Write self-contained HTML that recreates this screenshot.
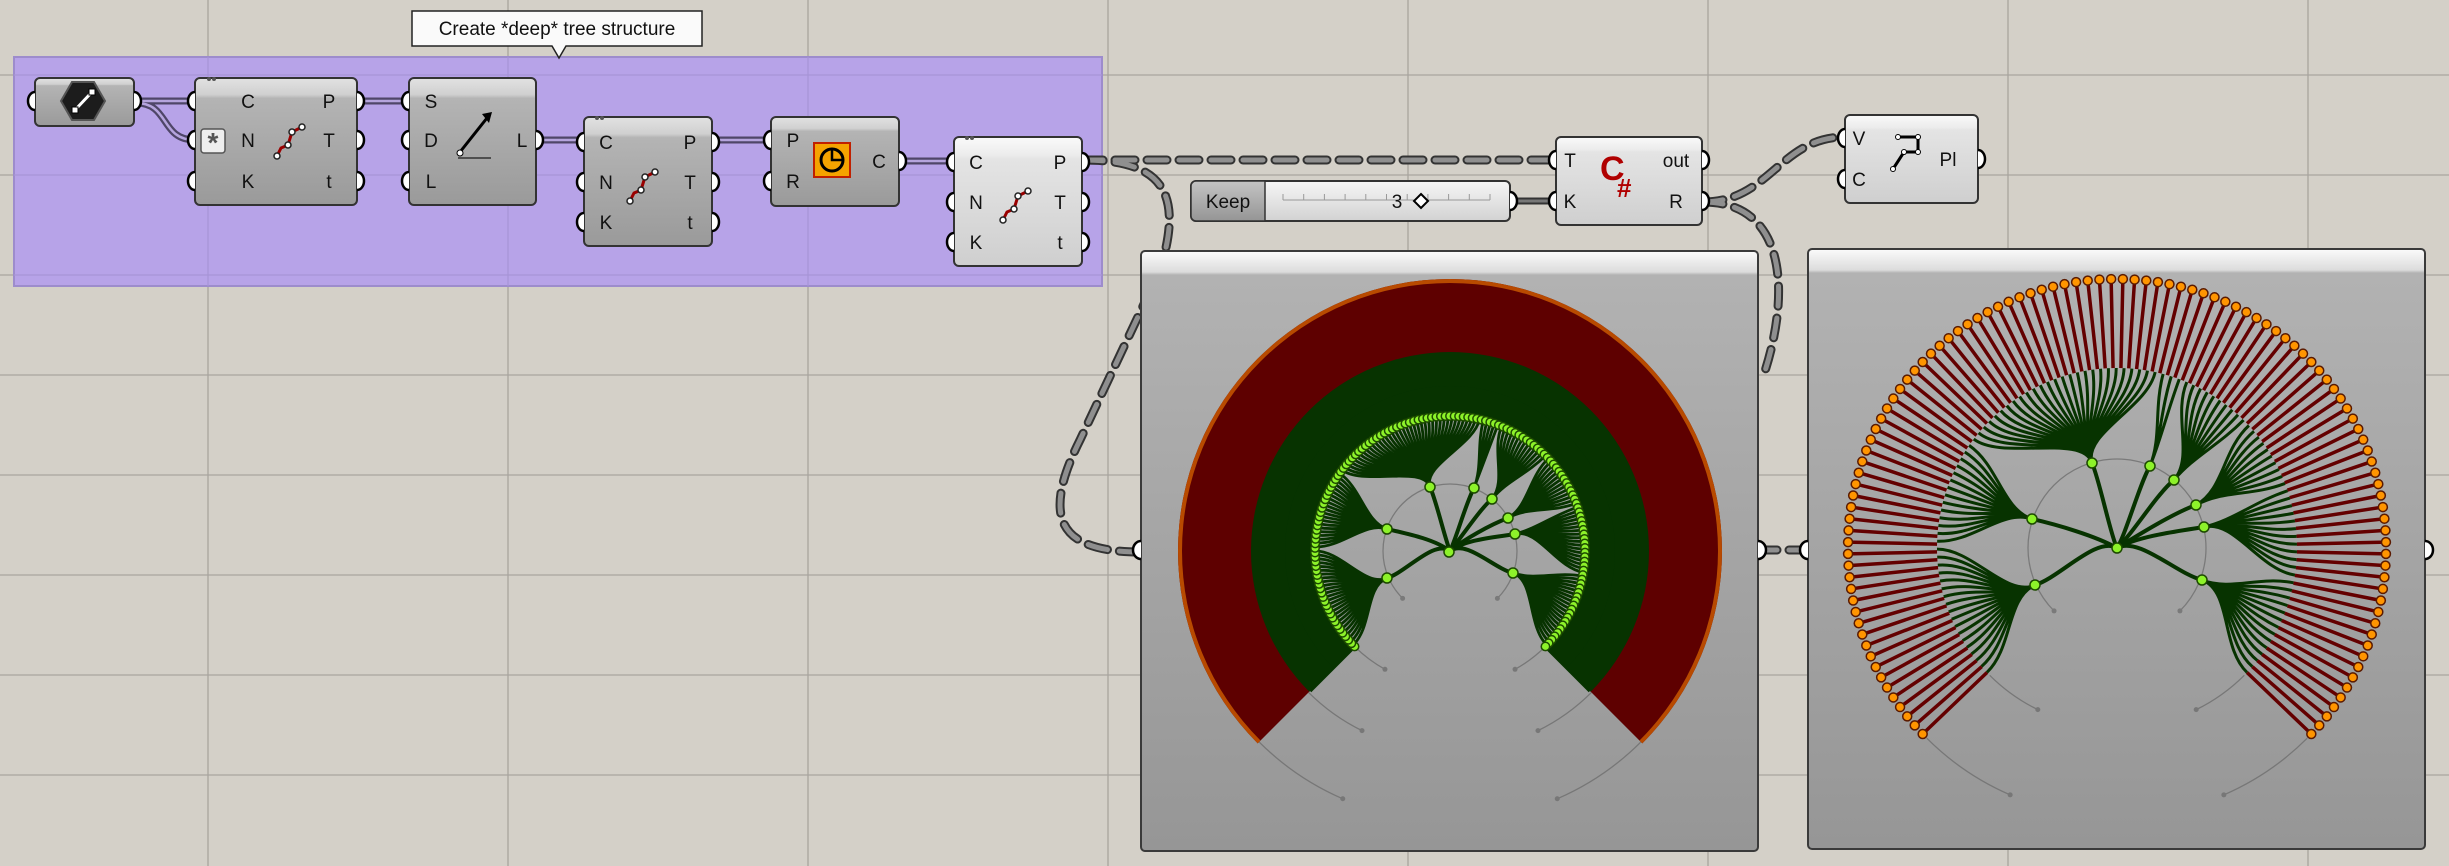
<!DOCTYPE html>
<html><head><meta charset="utf-8">
<style>
html,body{margin:0;padding:0;background:#d4d0c8;}
svg{display:block;}
text{font-family:"Liberation Sans",sans-serif;font-size:19px;fill:#111;}
</style></head>
<body>
<svg id="s" width="2449" height="866" viewBox="0 0 2449 866" xmlns="http://www.w3.org/2000/svg">
<defs>
<linearGradient id="gDark" x1="0" y1="0" x2="0" y2="1">
<stop offset="0" stop-color="#e2e2e2"/><stop offset="0.13" stop-color="#d0d0d0"/><stop offset="0.16" stop-color="#b4b4b4"/><stop offset="1" stop-color="#9a9a9a"/></linearGradient>
<linearGradient id="gLight" x1="0" y1="0" x2="0" y2="1">
<stop offset="0" stop-color="#fafafa"/><stop offset="0.14" stop-color="#ececec"/><stop offset="0.17" stop-color="#e4e4e4"/><stop offset="1" stop-color="#cfcfcf"/></linearGradient>
<linearGradient id="gPanel" x1="0" y1="0" x2="0" y2="1">
<stop offset="0" stop-color="#fbfbfb"/><stop offset="0.035" stop-color="#dcdcdc"/><stop offset="0.04" stop-color="#b2b2b2"/><stop offset="1" stop-color="#969696"/></linearGradient>
<linearGradient id="gSlider" x1="0" y1="0" x2="0" y2="1">
<stop offset="0" stop-color="#f6f6f6"/><stop offset="1" stop-color="#d2d2d2"/></linearGradient>
<linearGradient id="gKeep" x1="0" y1="0" x2="0" y2="1">
<stop offset="0" stop-color="#c4c4c4"/><stop offset="1" stop-color="#959595"/></linearGradient>
<clipPath id="cpL"><rect x="1142" y="252" width="615" height="598"/></clipPath>
<clipPath id="cpR"><rect x="1809" y="250" width="615" height="598"/></clipPath>
</defs>
<g id="grid" stroke="#a9a59e" stroke-width="1.3"></g>

<rect x="14" y="57" width="1088" height="229" fill="#b7a3e8" stroke="#9d8ccc" stroke-width="2"/>
<g stroke="#a794d6" stroke-width="1.2"><line x1="14" y1="75" x2="1102" y2="75"/><line x1="14" y1="175" x2="1102" y2="175"/><line x1="14" y1="275" x2="1102" y2="275"/><line x1="208" y1="57" x2="208" y2="286"/><line x1="508" y1="57" x2="508" y2="286"/><line x1="808" y1="57" x2="808" y2="286"/></g>

<path d="M412,11 H702 V46 H566 L559,58 L552,46 H412 Z" fill="#fafafa" stroke="#222" stroke-width="1.5"/>
<text x="557" y="35" text-anchor="middle" style="font-size:19px">Create *deep* tree structure</text>

<g fill="none" stroke="#4f4668" stroke-width="7" stroke-linecap="round">
<path d="M136,101 H195"/><path d="M136,103 C170,103 160,140 195,140"/>
<path d="M357,101 H409"/><path d="M537,140 H584"/><path d="M713,140 H771"/><path d="M900,161 H954"/>
</g>
<g fill="none" stroke="#b5a4dd" stroke-width="2.5">
<path d="M136,101 H195"/><path d="M136,103 C170,103 160,140 195,140"/>
<path d="M357,101 H409"/><path d="M537,140 H584"/><path d="M713,140 H771"/><path d="M900,161 H954"/>
</g>
<path d="M1510,201 H1556" stroke="#333" stroke-width="7" fill="none"/>
<path d="M1510,201 H1556" stroke="#777" stroke-width="3" fill="none"/>

<g fill="none" stroke-linecap="round">
<g stroke="#333" stroke-width="9" stroke-dasharray="20 12">
<path id="w1" d="M1083,160 H1556"/>
<path id="w2" d="M1083,160 C1160,160 1185,190 1160,270 L1080,440 C1040,520 1060,552 1141,552"/>
<path id="w3" d="M1703,202 C1770,202 1780,137 1845,137"/>
<path id="w4" d="M1703,202 C1790,202 1790,300 1762,380"/>
<path id="w5" d="M1757,550 H1808"/>
</g>
<g stroke="#8f8f8f" stroke-width="5" stroke-dasharray="20 12">
<use href="#w1"/><use href="#w2"/><use href="#w3"/><use href="#w4"/><use href="#w5"/>
</g>
</g>

<g id="comps"></g>

<rect x="1141" y="251" width="617" height="600" rx="4" fill="url(#gPanel)" stroke="#3a3a3a" stroke-width="2"/>
<rect x="1808" y="249" width="617" height="600" rx="4" fill="url(#gPanel)" stroke="#3a3a3a" stroke-width="2"/>
<g id="pl" clip-path="url(#cpL)"></g>
<g id="pr" clip-path="url(#cpR)"></g>
<g fill="#fff" stroke="#000" stroke-width="2.5">
<path d="M1141,541 a8,9 0 0 0 0,18"/><path d="M1758,541 a8,9 0 0 1 0,18"/>
<path d="M1808,541 a8,9 0 0 0 0,18"/><path d="M2425,541 a8,9 0 0 1 0,18"/>
</g>
</svg>
<script>
var NS="http://www.w3.org/2000/svg";
function el(p,t,a,txt){var e=document.createElementNS(NS,t);for(var k in a)e.setAttribute(k,a[k]);if(txt!==undefined)e.textContent=txt;p.appendChild(e);return e;}
var grid=document.getElementById('grid');
for(var x=208;x<2449;x+=300)el(grid,'line',{x1:x,y1:0,x2:x,y2:866});
for(var y=75;y<866;y+=100)el(grid,'line',{x1:0,y1:y,x2:2449,y2:y});
var C=document.getElementById('comps');
function port(x,y,side){
  var d= side<0 ? "M"+x+","+(y-9)+" a7,9 0 0 0 0,18" : "M"+x+","+(y-9)+" a7,9 0 0 1 0,18";
  el(C,'path',{d:d,fill:'#fff',stroke:'#000','stroke-width':2.5});
}
function comp(x,y,w,h,fill,ins,outs){
  el(C,'rect',{x:x,y:y,width:w,height:h,rx:5,fill:fill,stroke:'#333','stroke-width':2});
  ins.forEach(function(p){port(x,p[1],-1);if(p[0])el(C,'text',{x:x+p[2],y:p[1]+7,'text-anchor':'middle'},p[0]);});
  outs.forEach(function(p){port(x+w,p[1],1);if(p[0])el(C,'text',{x:x+w-p[2],y:p[1]+7,'text-anchor':'middle'},p[0]);});
}
function divIcon(cx,cy){
  el(C,'path',{d:"M"+(cx-13)+","+(cy+14)+" L"+(cx-9)+","+(cy+6)+" L"+(cx-2)+","+(cy+3)+" L"+(cx+2)+","+(cy-10)+" L"+(cx+12)+","+(cy-15),fill:'none',stroke:'#9a0000','stroke-width':3});
  [[cx-13,cy+14],[cx-2,cy+3],[cx+2,cy-10],[cx+12,cy-15]].forEach(function(p){el(C,'circle',{cx:p[0],cy:p[1],r:3,fill:'#fff',stroke:'#222','stroke-width':1.5});});
}
el(C,'rect',{x:35,y:78,width:99,height:48,rx:5,fill:'url(#gDark)',stroke:'#333','stroke-width':2});
port(35,101,-1);port(134,101,1);
el(C,'path',{d:"M61,101 L72,82 L94,82 L105,101 L94,120 L72,120 Z",fill:'#1c1c1c',stroke:'#555','stroke-width':2});
el(C,'path',{d:"M75,110 L92,92",stroke:'#fff','stroke-width':3});
el(C,'rect',{x:72,y:107,width:6,height:6,fill:'#fff',stroke:'#000'});el(C,'rect',{x:89,y:89,width:6,height:6,fill:'#fff',stroke:'#000'});
comp(195,78,162,127,'url(#gDark)',[['C',101,53],['N',140,53],['K',181,53]],[['P',101,28],['T',140,28],['t',181,28]]);
el(C,'rect',{x:201,y:129,width:24,height:24,rx:3,fill:'#eee',stroke:'#555','stroke-width':1.5});
el(C,'text',{x:213,y:152,'text-anchor':'middle',style:'font-size:28px;font-weight:bold;fill:#555'},'*');
divIcon(290,142);
el(C,'circle',{cx:209,cy:79,r:2,fill:'#555'});el(C,'circle',{cx:214,cy:79,r:2,fill:'#555'});
comp(409,78,127,127,'url(#gDark)',[['S',101,22],['D',140,22],['L',181,22]],[['L',140,14]]);
el(C,'path',{d:"M460,152 L487,118",stroke:'#000','stroke-width':3});
el(C,'path',{d:"M482,114 L492,112 L489,123 Z",fill:'#000'});
el(C,'path',{d:"M458,158 H491",stroke:'#333','stroke-width':1.5});
el(C,'circle',{cx:460,cy:153,r:3,fill:'#fff',stroke:'#000'});
comp(584,117,128,129,'url(#gDark)',[['C',142,22],['N',182,22],['K',222,22]],[['P',142,22],['T',182,22],['t',222,22]]);
divIcon(643,187);
el(C,'circle',{cx:597,cy:118,r:2,fill:'#555'});el(C,'circle',{cx:602,cy:118,r:2,fill:'#555'});
comp(771,117,128,89,'url(#gDark)',[['P',140,22],['R',181,22]],[['C',161,20]]);
el(C,'rect',{x:814,y:143,width:36,height:34,fill:'#f5a300',stroke:'#c02000','stroke-width':2});
el(C,'circle',{cx:832,cy:160,r:11,fill:'none',stroke:'#000','stroke-width':3});
el(C,'path',{d:"M832,149 V160 H843",fill:'none',stroke:'#000','stroke-width':2.5});
comp(954,137,128,129,'url(#gLight)',[['C',162,22],['N',202,22],['K',242,22]],[['P',162,22],['T',202,22],['t',242,22]]);
divIcon(1016,206);
el(C,'circle',{cx:967,cy:138,r:2,fill:'#555'});el(C,'circle',{cx:972,cy:138,r:2,fill:'#555'});
el(C,'rect',{x:1191,y:181,width:319,height:40,rx:5,fill:'url(#gSlider)',stroke:'#333','stroke-width':2});
el(C,'path',{d:"M1196,181 H1265 V221 H1196 a5,5 0 0 1 -5,-5 V186 a5,5 0 0 1 5,-5Z",fill:'url(#gKeep)',stroke:'#333','stroke-width':1.5});
el(C,'text',{x:1228,y:208,'text-anchor':'middle'},'Keep');
el(C,'path',{d:"M1283,200 H1490",stroke:'#999','stroke-width':1});
for(var i=0;i<11;i++){var xx=1283+i*20.7;el(C,'line',{x1:xx,y1:194,x2:xx,y2:200,stroke:'#999'});}
el(C,'text',{x:1397,y:208,'text-anchor':'middle'},'3');
el(C,'path',{d:"M1421,194 L1428,201 L1421,208 L1414,201 Z",fill:'#fff',stroke:'#000','stroke-width':2});
port(1510,201,1);
comp(1556,137,146,88,'url(#gLight)',[['T',160,14],['K',201,14]],[['out',160,26],['R',201,26]]);
el(C,'text',{x:1600,y:180,style:'font-size:34px;font-weight:bold;fill:#b00000'},'C');
el(C,'text',{x:1617,y:197,style:'font-size:26px;font-weight:bold;fill:#b00000'},'#');
comp(1845,115,133,88,'url(#gLight)',[['V',138,14],['C',179,14]],[['Pl',159,30]]);
el(C,'path',{d:"M1893,169 L1904,152 L1918,152 L1918,137 L1898,137",fill:'none',stroke:'#000','stroke-width':3});
[[1893,169],[1904,152],[1918,152],[1918,137],[1898,137]].forEach(function(p){el(C,'circle',{cx:p[0],cy:p[1],r:2.5,fill:'#fff',stroke:'#000'});});

function P(cx,cy,R,t){var a=(225-270*t)*Math.PI/180;return [cx+R*Math.cos(a),cy-R*Math.sin(a)];}
function annulus(g,cx,cy,r1,r2,fill){
  var a=P(cx,cy,r2,0),b=P(cx,cy,r2,1),c=P(cx,cy,r1,1),d=P(cx,cy,r1,0);
  el(g,'path',{d:"M"+a+" A"+r2+","+r2+" 0 1 1 "+b+" L"+c+" A"+r1+","+r1+" 0 1 0 "+d+" Z",fill:fill});
}
function ext(g,cx,cy,r,te){ // gray extensions beyond arc ends
  var a=P(cx,cy,r,-te),b=P(cx,cy,r,0),c=P(cx,cy,r,1),d=P(cx,cy,r,1+te);
  el(g,'path',{d:"M"+b+" A"+r+","+r+" 0 0 0 "+a+" M"+c+" A"+r+","+r+" 0 0 1 "+d,fill:'none',stroke:'#777','stroke-width':1.3});
  [a,d].forEach(function(p){el(g,'circle',{cx:p[0],cy:p[1],r:2.5,fill:'#777'});});
}
function arc(g,cx,cy,r){var a=P(cx,cy,r,0),b=P(cx,cy,r,1);
  el(g,'path',{d:"M"+a+" A"+r+","+r+" 0 1 1 "+b,fill:'none',stroke:'#7a7a7a','stroke-width':1.3});
  el(g,'circle',{cx:a[0],cy:a[1],r:2.5,fill:'#7a7a7a'});el(g,'circle',{cx:b[0],cy:b[1],r:2.5,fill:'#7a7a7a'});}
function tree(g,cx,cy,nodes,br,Rf,nLines,lw){
  nodes.forEach(function(n){
    el(g,'path',{d:"M"+cx+","+cy+" C"+(cx+(n[0]-cx)*0.25)+","+(cy-12)+" "+(n[0]-(n[0]-cx)*0.3)+","+(n[1]+(cy-n[1])*0.2)+" "+n[0]+","+n[1],fill:'none',stroke:'#073300','stroke-width':4});
  });
  nodes.forEach(function(n,k){
    var t0=br[k],t1=br[k+1],cnt=Math.max(2,Math.round((t1-t0)*nLines));
    var d="";
    for(var i=0;i<cnt;i++){var t=t0+(t1-t0)*(i+0.5)/cnt;var e=P(cx,cy,Rf,t),m=P(cx,cy,Rf*0.8,t);
      var ox=n[0]+(n[0]-cx)*0.35,oy=n[1]+(n[1]-cy)*0.35;
      d+="M"+n[0]+","+n[1]+" C"+ox+","+oy+" "+m[0]+","+m[1]+" "+e[0]+","+e[1];}
    el(g,'path',{d:d,fill:'none',stroke:'#073300','stroke-width':lw});
  });
}
function dot(g,x,y,r,f,s){el(g,'circle',{cx:x,cy:y,r:r,fill:f,stroke:s,'stroke-width':1.5});}
var br=[0,.17,.3,.55,.58,.67,.76,.87,1];
var L=document.getElementById('pl'),cx=1450,cy=551;
arc(L,cx,cy,67);ext(L,cx,cy,135,0.06);ext(L,cx,cy,200,0.07);ext(L,cx,cy,270,0.08);
annulus(L,cx,cy,198,272,'#5e0000');
(function(){var d="";for(var i=0;i<=220;i++){var t=i/220,a=P(cx,cy,137,t),b=P(cx,cy,198,t);d+="M"+a+" L"+b;}
 el(L,'path',{d:d,stroke:'#073300','stroke-width':3.6});})();
annulus(L,cx,cy,165,199,'#073300');
annulus(L,cx,cy,268,272,'#b84a00');
var nl=[[1387,578],[1387,529],[1430,487],[1474,488],[1492,499],[1508,518],[1515,534],[1513,573]];
tree(L,cx,cy,nl,br,135,160,2.8);
for(var i=0;i<=140;i++){var p=P(cx,cy,135,i/140);dot(L,p[0],p[1],4.2,'#8df22a','#1d4a00');}
nl.forEach(function(n){dot(L,n[0],n[1],5,'#8df22a','#1d4a00');});dot(L,1449,552,5,'#8df22a','#1d4a00');
var R=document.getElementById('pr');cx=2117;cy=548;
arc(R,cx,cy,89);ext(R,cx,cy,180,0.07);ext(R,cx,cy,269,0.08);
var nr=[[2035,585],[2032,519],[2092,463],[2150,466],[2174,480],[2196,505],[2204,527],[2202,580]];
tree(R,cx,cy,nr,br,180,108,3);
(function(){var d="";for(var i=0;i<108;i++){var t=(i+0.5)/108,a=P(cx,cy,180,t),b=P(cx,cy,269,t);d+="M"+a+" L"+b;}
 el(R,'path',{d:d,stroke:'#640000','stroke-width':3.5});
 for(var i=0;i<108;i++){var p=P(cx,cy,269,(i+0.5)/108);dot(R,p[0],p[1],4.5,'#ff9500','#5a1a00');}})();
nr.forEach(function(n){dot(R,n[0],n[1],5,'#8df22a','#1d4a00');});dot(R,2117,548,5,'#8df22a','#1d4a00');
</script>
</body></html>
